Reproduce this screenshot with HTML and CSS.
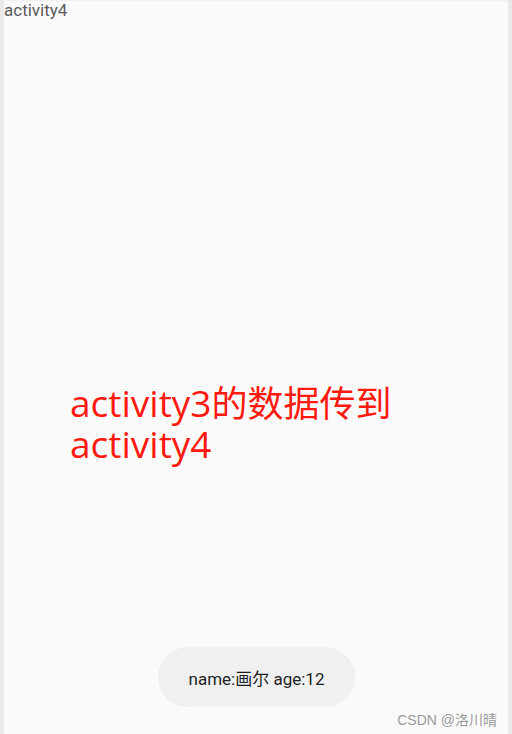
FILE: index.html
```html
<!DOCTYPE html>
<html lang="zh-CN">
  <head>
    <meta charset="UTF-8" />
    <meta name="viewport" content="width=device-width, initial-scale=1.0" />
    <title>activity4</title>
    <link rel="stylesheet" href="styles.css">
  </head>
  <body>
    <div class="screen">
      <div class="app-title">activity4</div>

      <div class="content">
        <p class="message">
          activity3<span class="cjk">的数据传到</span><br />activity4
        </p>
      </div>

      <!-- toast -->
      <div class="toast">name:画尔 age:12</div>
      <div class="watermark">CSDN @洛川晴</div>
    </div>
  </body>
</html>
```

FILE: styles.css
```css
* {
  margin: 0;
  padding: 0;
  box-sizing: border-box;
}
body {
  background-color: #e9e9e9;
  font-family: Roboto, "Noto Sans CJK SC", sans-serif;
}
.screen {
  position: relative;
  height: 734px;
  margin: 0 4px;
  background-color: #fafafa;
  border-top: 1px solid #f0f0f0;
  display: flex;
  flex-direction: column;
}
.app-title {
  font-size: 17px;
  line-height: 19px;
  color: #5c5c5c;
}
.content {
  flex: 1;
  padding: 363px 0 0 66px;
}
.message {
  font-family: "Open Sans", "Noto Sans CJK SC", sans-serif;
  font-size: 37px;
  line-height: 40px;
  color: #ff1a0f;
}
.message .cjk {
  font-size: 36px;
}
/* ===toast=== */
.toast {
  position: absolute;
  left: 154px;
  top: 646px;
  width: 197px;
  height: 60px;
  border-radius: 30px;
  background-color: #f0f0f0;
  color: #1f1f1f;
  font-size: 17px;
  display: flex;
  justify-content: center;
  align-items: center;
}
.watermark {
  position: absolute;
  right: 11px;
  top: 708px;
  font-family: "Liberation Sans", "Noto Sans CJK SC", sans-serif;
  font-size: 14px;
  color: #9a9a9a;
}
```
